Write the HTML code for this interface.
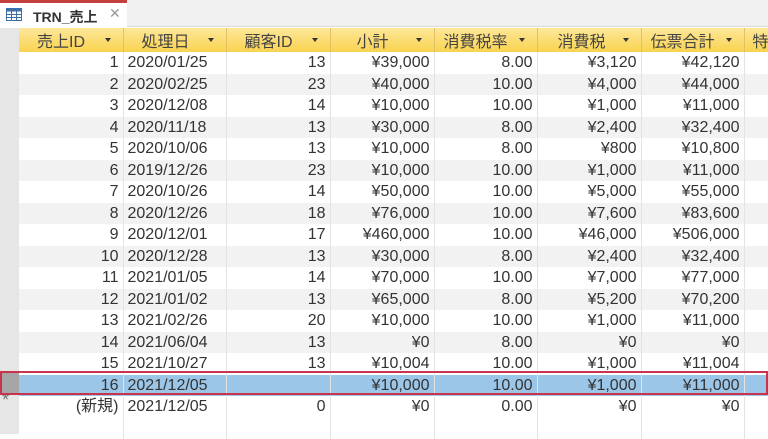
<!DOCTYPE html>
<html><head><meta charset="utf-8"><style>
*{margin:0;padding:0;box-sizing:border-box}
body{width:768px;height:434px;overflow:hidden;background:#fff;font-family:"Liberation Sans","Noto Sans CJK JP",sans-serif;color:#333;position:relative}
.topbar{position:absolute;left:0;top:0;width:768px;height:27px;background:#f0f0f0;border-bottom:1px solid #d8d8d8}
.tab{position:absolute;left:0;top:0;width:127px;height:28px;background:#fff;border-top:3px solid #c4403f}
.tab .t{position:absolute;left:33px;top:4px;font-size:14px;font-weight:bold;color:#333}
.tab .x{position:absolute;left:109px;top:2px;font-size:14px;color:#999}
.sel{position:absolute;left:0;top:28px;width:19px;height:406px;background:#e6e6e6}
table{position:absolute;left:19px;top:28px;border-collapse:collapse;font-size:16px;table-layout:fixed;width:785px}
td{height:21.5px;padding:0 4px;border-right:1px solid #e3e3e3;text-align:right;white-space:nowrap;overflow:hidden;line-height:21px}
th{height:22px;font-weight:normal;background:linear-gradient(#fde79a,#f9d34f);border-right:1px solid #e5c060;text-align:left;padding:0 0 0 18px;position:relative;font-size:16px;color:#444;white-space:nowrap}
th:after{content:"";position:absolute;right:12px;top:10px;border-left:3.5px solid transparent;border-right:3.5px solid transparent;border-top:4px solid #333}
tr.g td{background:#f2f2f2}
tr.s td{background:#9cc6e8}
</style></head><body>
<div class="topbar"></div>
<div class="tab">
<svg style="position:absolute;left:6px;top:5px" width="16" height="13"><rect x="0.5" y="0.5" width="15" height="12" fill="#fff" stroke="#3c6fa8"/><rect x="0.5" y="0.5" width="15" height="3" fill="#3c6fa8"/><path d="M0 6.5H16M0 9.5H16M5.5 3V13M10.5 3V13" stroke="#3c6fa8"/></svg>
<span class="t">TRN_売上</span><span class="x">✕</span></div>
<div class="sel"></div>
<div style="position:absolute;left:0;top:372px;width:19px;height:22px;background:#a6a6a6"></div>
<div style="position:absolute;left:2px;top:393px;font-size:18px;color:#777;line-height:14px">*</div>
<table>
<colgroup><col style="width:104px"><col style="width:103px"><col style="width:104px"><col style="width:104px"><col style="width:103px"><col style="width:104px"><col style="width:103px"><col style="width:60px"></colgroup>
<tr><th>売上ID</th><th>処理日</th><th>顧客ID</th><th style="padding-left:26px">小計</th><th style="padding-left:9px">消費税率</th><th style="padding-left:20px">消費税</th><th style="padding-left:9px">伝票合計</th><th style="padding-left:8px">特</th></tr>
<tr><td>1</td><td style="text-align:left">2020/01/25</td><td>13</td><td>¥39,000</td><td>8.00</td><td>¥3,120</td><td>¥42,120</td><td></td></tr>
<tr class="g"><td>2</td><td style="text-align:left">2020/02/25</td><td>23</td><td>¥40,000</td><td>10.00</td><td>¥4,000</td><td>¥44,000</td><td></td></tr>
<tr><td>3</td><td style="text-align:left">2020/12/08</td><td>14</td><td>¥10,000</td><td>10.00</td><td>¥1,000</td><td>¥11,000</td><td></td></tr>
<tr class="g"><td>4</td><td style="text-align:left">2020/11/18</td><td>13</td><td>¥30,000</td><td>8.00</td><td>¥2,400</td><td>¥32,400</td><td></td></tr>
<tr><td>5</td><td style="text-align:left">2020/10/06</td><td>13</td><td>¥10,000</td><td>8.00</td><td>¥800</td><td>¥10,800</td><td></td></tr>
<tr class="g"><td>6</td><td style="text-align:left">2019/12/26</td><td>23</td><td>¥10,000</td><td>10.00</td><td>¥1,000</td><td>¥11,000</td><td></td></tr>
<tr><td>7</td><td style="text-align:left">2020/10/26</td><td>14</td><td>¥50,000</td><td>10.00</td><td>¥5,000</td><td>¥55,000</td><td></td></tr>
<tr class="g"><td>8</td><td style="text-align:left">2020/12/26</td><td>18</td><td>¥76,000</td><td>10.00</td><td>¥7,600</td><td>¥83,600</td><td></td></tr>
<tr><td>9</td><td style="text-align:left">2020/12/01</td><td>17</td><td>¥460,000</td><td>10.00</td><td>¥46,000</td><td>¥506,000</td><td></td></tr>
<tr class="g"><td>10</td><td style="text-align:left">2020/12/28</td><td>13</td><td>¥30,000</td><td>8.00</td><td>¥2,400</td><td>¥32,400</td><td></td></tr>
<tr><td>11</td><td style="text-align:left">2021/01/05</td><td>14</td><td>¥70,000</td><td>10.00</td><td>¥7,000</td><td>¥77,000</td><td></td></tr>
<tr class="g"><td>12</td><td style="text-align:left">2021/01/02</td><td>13</td><td>¥65,000</td><td>8.00</td><td>¥5,200</td><td>¥70,200</td><td></td></tr>
<tr><td>13</td><td style="text-align:left">2021/02/26</td><td>20</td><td>¥10,000</td><td>10.00</td><td>¥1,000</td><td>¥11,000</td><td></td></tr>
<tr class="g"><td>14</td><td style="text-align:left">2021/06/04</td><td>13</td><td>¥0</td><td>8.00</td><td>¥0</td><td>¥0</td><td></td></tr>
<tr><td>15</td><td style="text-align:left">2021/10/27</td><td>13</td><td>¥10,004</td><td>10.00</td><td>¥1,000</td><td>¥11,004</td><td></td></tr>
<tr class="s"><td>16</td><td style="text-align:left">2021/12/05</td><td></td><td>¥10,000</td><td>10.00</td><td>¥1,000</td><td>¥11,000</td><td></td></tr>
<tr><td>(新規)</td><td style="text-align:left">2021/12/05</td><td>0</td><td>¥0</td><td>0.00</td><td>¥0</td><td>¥0</td><td></td></tr>
<tr><td></td><td></td><td></td><td></td><td></td><td></td><td></td><td></td></tr>
</table>
<div style="position:absolute;left:0;top:371px;width:768px;height:24px;border:2px solid #c8344e"></div>
</body></html>
